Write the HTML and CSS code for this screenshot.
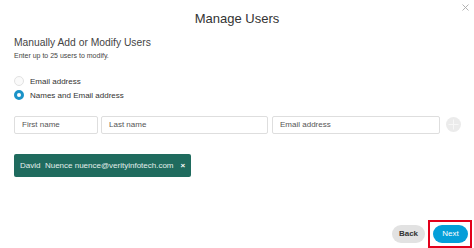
FILE: index.html
```html
<!DOCTYPE html>
<html>
<head>
<meta charset="utf-8">
<link rel="stylesheet" href="styles.css">
</head>
<body>
<div class="modal">
  <svg class="close" width="7" height="7" viewBox="0 0 7 7"><path d="M0.5 0.5L6.5 6.5M6.5 0.5L0.5 6.5" stroke="#aaa" stroke-width="0.9" fill="none"/></svg>
  <div class="body">
    <h1 class="title">Manage Users</h1>
    <h2 class="heading">Manually Add or Modify Users</h2>
    <p class="sub">Enter up to 25 users to modify.</p>
    <div class="radios">
      <div class="radio-row"><span class="radio"></span><span class="label">Email address</span></div>
      <div class="radio-row"><span class="radio checked"></span><span class="label">Names and Email address</span></div>
    </div>
    <div class="inputs">
      <div class="input w-first">First name</div>
      <div class="input w-last">Last name</div>
      <div class="input w-email">Email address</div>
      <div class="plus"><svg width="15" height="15" viewBox="0 0 15 15"><path d="M7.5 2.5V12.5M2.5 7.5H12.5" stroke="#f7f7f7" stroke-width="1" fill="none"/></svg></div>
    </div>
    <div class="chips">
      <div class="chip"><span class="chip-text">David&nbsp; Nuence nuence@verityinfotech.com</span><span class="chip-x">×</span></div>
    </div>
  </div>
  <div class="footer">
    <div class="btn back">Back</div>
    <div class="highlight"><div class="btn next">Next</div></div>
  </div>
</div>
</body>
</html>
```
FILE: styles.css
```css
* { box-sizing: border-box; }
html, body { margin: 0; padding: 0; background: #fff; }
body { font-family: "Liberation Sans", Arial, sans-serif; color: #333; }
.modal { position: relative; width: 474px; height: 248px; overflow: hidden; }
.close { position: absolute; left: 462px; top: 4px; }
.body { padding: 0 0 0 14px; }
.title { margin: 0; padding: 11px 14px 0 0; font-size: 13px; line-height: 16px; font-weight: normal; text-align: center; color: #333; }
.heading { margin: 9px 0 0; font-size: 10.3px; line-height: 13px; font-weight: normal; color: #444; }
.sub { margin: 2.4px 0 0; font-size: 7px; line-height: 9px; color: #444; }
.radios { margin-top: 14px; display: flex; flex-direction: column; }
.radio-row { display: flex; align-items: center; height: 14px; }
.radio { width: 10px; height: 10px; border-radius: 50%; border: 1px solid #e2e2e2; background: #fafafa; margin-right: 6px; margin-left: 0; }
.radio.checked { border: 3px solid #1b93c8; background: #fff; }
.label { font-size: 8px; color: #333; }
.inputs { margin-top: 13.5px; display: flex; align-items: center; }
.input { height: 18px; border: 1px solid #dedede; border-radius: 2px; font-size: 8px; color: #555; padding-left: 7px; display: flex; align-items: center; }
.w-first { width: 84px; margin-right: 3px; }
.w-last { width: 167px; margin-right: 4px; }
.w-email { width: 168px; }
.plus { width: 15px; height: 15px; border-radius: 50%; background: #ebebeb; margin-left: 6px; display: flex; }
.chips { margin-top: 20px; display: flex; }
.chip { width: 177px; height: 23px; background: #1f6b5e; border-radius: 2px; display: flex; align-items: center; padding-left: 6px; color: #e3efec; font-size: 8px; }
.chip-x { margin-left: 7px; font-weight: bold; font-size: 8px; color: #fff; }
.footer { margin-top: 43px; display: flex; justify-content: flex-end; align-items: center; padding-right: 2px; }
.btn { height: 18px; border-radius: 9px; font-size: 8px; display: flex; align-items: center; justify-content: center; font-weight: bold; }
.back { width: 33px; background: #e2e2e2; color: #333; margin-right: 3px; }
.highlight { border: 2px solid #e3001b; padding: 3px 2px 3px 3px; }
.next { width: 35px; background: #049fd9; color: #fff; font-weight: normal; }
```
